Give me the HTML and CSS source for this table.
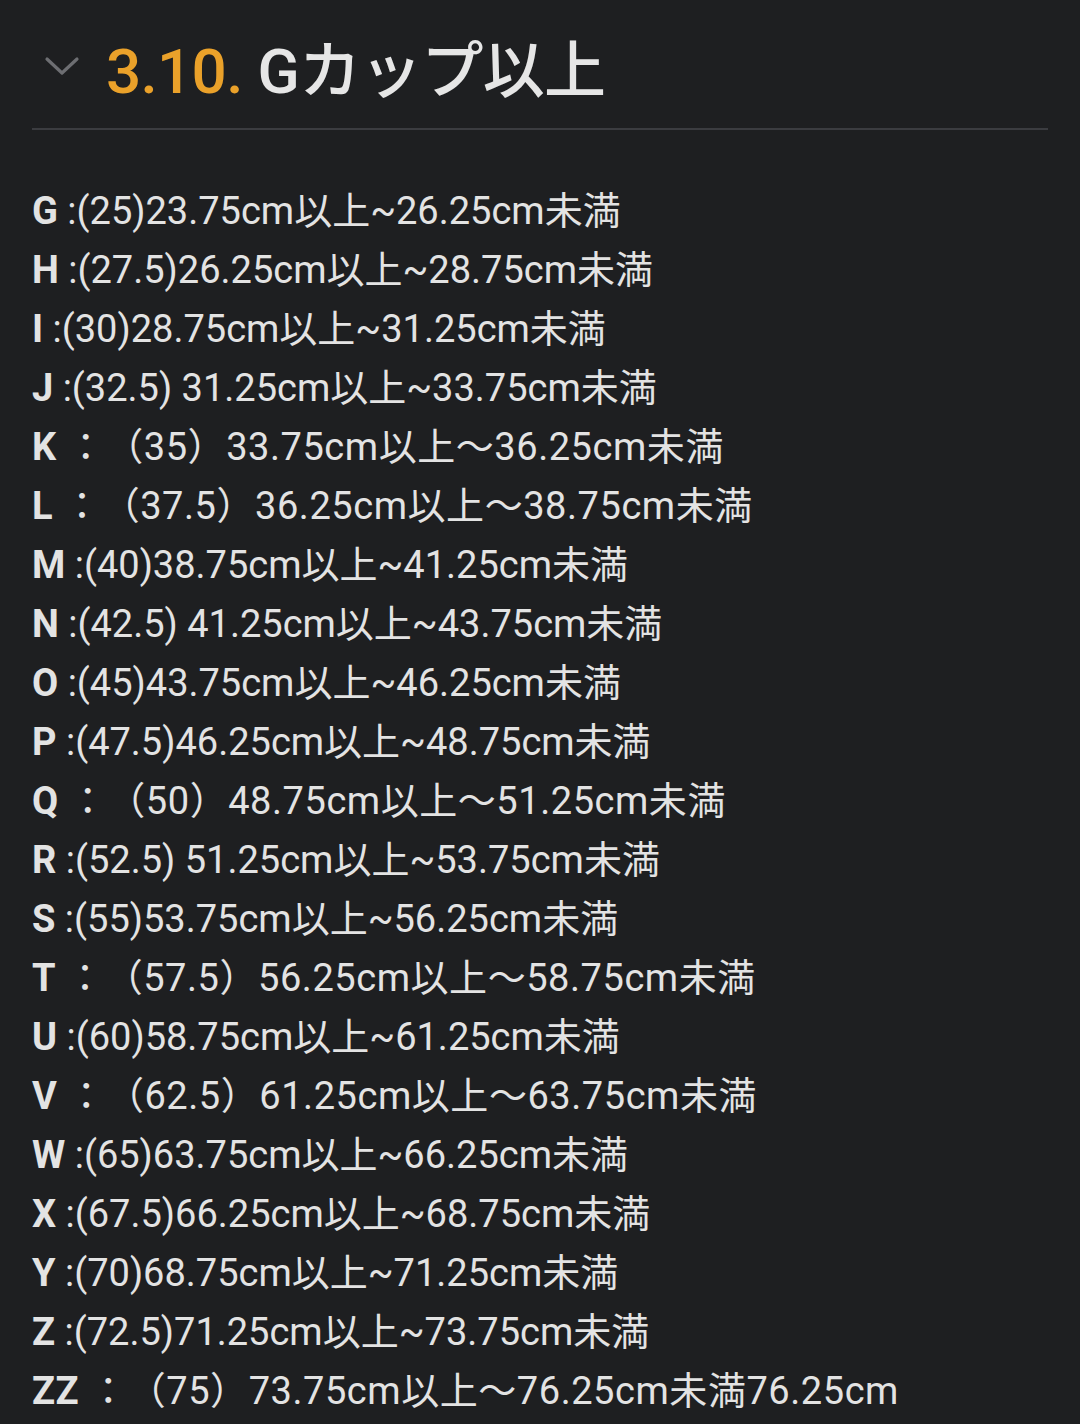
FILE: index.html
```html
<!DOCTYPE html>
<html lang="ja">
<head>
<meta charset="utf-8">
<link rel="stylesheet" href="styles.css">
</head>
<body>
<div class="page">
  <header class="head">
    <svg class="chev" width="36" height="22" viewBox="0 0 36 22"><path d="M3 4 L18 18 L33 4" fill="none" stroke="#6d6e72" stroke-width="3.2" stroke-linecap="round" stroke-linejoin="round"/></svg>
    <h1 class="title"><span class="num">3.10.</span> Gカップ以上</h1>
  </header>
  <div class="list">
    <p class="row"><b>G</b> :(25)23.75cm以上~26.25cm未満</p>
    <p class="row"><b>H</b> :(27.5)26.25cm以上~28.75cm未満</p>
    <p class="row"><b>I</b> :(30)28.75cm以上~31.25cm未満</p>
    <p class="row"><b>J</b> :(32.5) 31.25cm以上~33.75cm未満</p>
    <p class="row fw"><b>K</b> ：（35）33.75cm以上〜36.25cm未満</p>
    <p class="row fw"><b>L</b> ：（37.5）36.25cm以上〜38.75cm未満</p>
    <p class="row"><b>M</b> :(40)38.75cm以上~41.25cm未満</p>
    <p class="row"><b>N</b> :(42.5) 41.25cm以上~43.75cm未満</p>
    <p class="row"><b>O</b> :(45)43.75cm以上~46.25cm未満</p>
    <p class="row"><b>P</b> :(47.5)46.25cm以上~48.75cm未満</p>
    <p class="row fw"><b>Q</b> ：（50）48.75cm以上〜51.25cm未満</p>
    <p class="row"><b>R</b> :(52.5) 51.25cm以上~53.75cm未満</p>
    <p class="row"><b>S</b> :(55)53.75cm以上~56.25cm未満</p>
    <p class="row fw"><b>T</b> ：（57.5）56.25cm以上〜58.75cm未満</p>
    <p class="row"><b>U</b> :(60)58.75cm以上~61.25cm未満</p>
    <p class="row fw"><b>V</b> ：（62.5）61.25cm以上〜63.75cm未満</p>
    <p class="row"><b>W</b> :(65)63.75cm以上~66.25cm未満</p>
    <p class="row"><b>X</b> :(67.5)66.25cm以上~68.75cm未満</p>
    <p class="row"><b>Y</b> :(70)68.75cm以上~71.25cm未満</p>
    <p class="row"><b>Z</b> :(72.5)71.25cm以上~73.75cm未満</p>
    <p class="row fw"><b>ZZ</b> ：（75）73.75cm以上〜76.25cm未満76.25cm</p>
  </div>
</div>
</body>
</html>
```
FILE: styles.css
```css
html, body {
  margin: 0;
  padding: 0;
  background: #1e1f21;
}
body {
  width: 1080px;
  height: 1424px;
  overflow: hidden;
  font-family: Roboto, "Noto Sans CJK JP", sans-serif;
  color: #e3e3e3;
}
.page {
  padding: 0 32px;
}
.head {
  display: flex;
  align-items: center;
  height: 128px;
  border-bottom: 2px solid #3b3c40;
  padding-left: 12px;
  gap: 26px;
}
.chev {
  margin-top: 4px;
  flex: none;
}
.title {
  margin: 0;
  font-size: 62px;
  font-weight: 500;
  color: #e6e6e6;
  line-height: 1;
  margin-top: 16px;
  letter-spacing: -0.7px;
}
.num {
  color: #eaa12a;
}
.list {
  padding-top: 52px;
}
.row {
  margin: 0;
  font-size: 38px;
  line-height: 59px;
  white-space: nowrap;
  text-spacing-trim: space-all;
}
.row.fw {
  letter-spacing: 0.55px;
}
.row b {
  font-weight: 700;
}
```
